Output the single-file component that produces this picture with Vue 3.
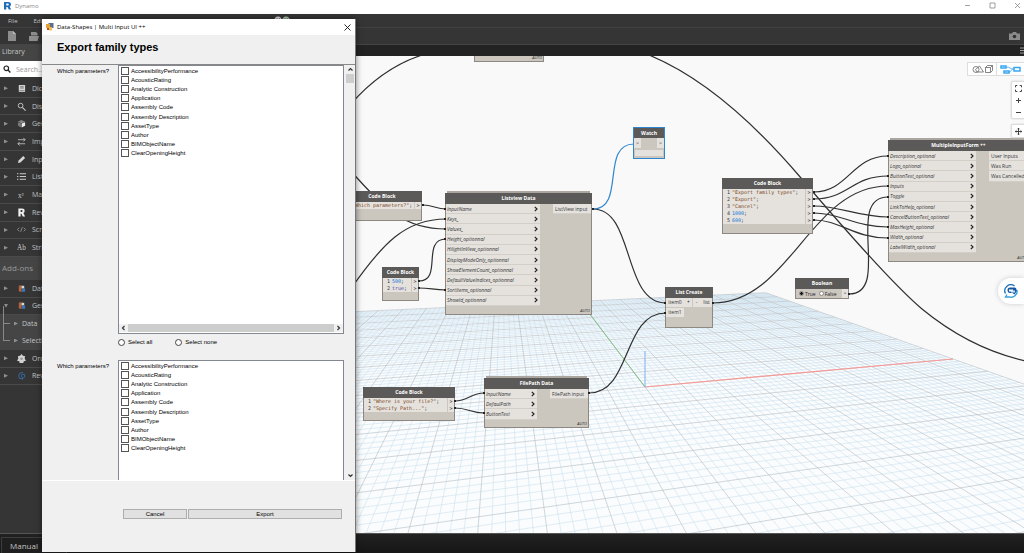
<script setup>
import { ref } from 'vue'

const search = ref('')
const selectMode = ref('')
const flag = ref('true')

const libraryItems = [
  { label: 'Dictionary', icon: 'book' },
  { label: 'Display', icon: 'search' },
  { label: 'Geometry', icon: 'cube' },
  { label: 'ImportExport', icon: 'swap' },
  { label: 'Input', icon: 'pencil' },
  { label: 'List', icon: 'list' },
  { label: 'Math', icon: 'math' },
  { label: 'Revit', icon: 'revit' },
  { label: 'Script', icon: 'code' },
  { label: 'String', icon: 'text' },
]

const parameters = [
  'AccessibilityPerformance',
  'AcousticRating',
  'Analytic Construction',
  'Application',
  'Assembly Code',
  'Assembly Description',
  'AssetType',
  'Author',
  'BIMObjectName',
  'ClearOpeningHeight',
]

/* Canvas origin relative to the window */
const OX = 200
const OY = 56

function place(n) {
  return { left: `${n.x - OX}px`, top: `${n.y - OY}px`, width: `${n.w}px`, height: `${n.h}px` }
}

const codeBlocks = [
  { x: 342, y: 191, w: 80, h: 30, lines: [['s', '"Which parameters?"']] },
  { x: 382, y: 267, w: 37, h: 34, lines: [['n', '500'], ['k', 'true']] },
  { x: 363, y: 387, w: 92, h: 34, lines: [['s', '"Where is your file?"'], ['s', '"Specify Path..."']] },
  {
    x: 722, y: 178, w: 91, h: 56,
    lines: [['s', '"Export family types"'], ['s', '"Export"'], ['s', '"Cancel"'], ['n', '1000'], ['n', '600']],
  },
]

const functionNodes = [
  {
    title: 'Listview Data', x: 445, y: 193, w: 147, h: 122, inW: 94, outW: 38,
    inputs: ['InputName', 'Keys_', 'Values_', 'Height_optionnal', 'HilightInView_optionnal', 'DisplayModeOnly_optionnal', 'ShowElementCount_optionnal', 'DefaultValueIndices_optionnal', 'SortItems_optionnal', 'ShowId_optionnal'],
    outputs: ['ListView input'],
  },
  {
    title: 'FilePath Data', x: 484, y: 378, w: 105, h: 50, inW: 52, outW: 38,
    inputs: ['InputName', 'DefaulPath', 'ButtonText'],
    outputs: ['FilePath input'],
  },
  {
    title: 'MultipleInputForm ++', x: 888, y: 140, w: 141, h: 122, inW: 87, outW: 39,
    inputs: ['Description_optional', 'Logo_optional', 'ButtonText_optional', 'Inputs', 'Toggle', 'LinkToHelp_optional', 'CancelButtonText_optional', 'MaxHeight_optional', 'Width_optional', 'LabelWidth_optional'],
    outputs: ['User Inputs', 'Was Run', 'Was Cancelled'],
  },
]

/* Perspective projection of the ground plane; u and v run from -1 to 1 */
function project(u, v) {
  const w = 0.1832 * u + 0.8434 * v + 1
  return [(482.6 * u + 424.2 * v + 645) / w, (37.77 * u + 168.4 * v + 387) / w]
}
function segment(a, b) {
  const p = project(...a)
  const q = project(...b)
  return `M${p[0].toFixed(2)} ${p[1].toFixed(2)}L${q[0].toFixed(2)} ${q[1].toFixed(2)}`
}
let minor = ''
let major = ''
for (let i = -50; i <= 50; i++) {
  const t = i / 50
  let d = segment([t, -0.6], [t, 1])
  if (t >= -0.6) d += segment([-1, t], [1, t])
  if (i % 5 === 0) major += d
  else minor += d
}
const plane = [[-1, -0.6], [-1, 1], [1, 1], [1, -0.6]].map((c) => project(...c).join(',')).join(' ')

const wires = [
  'M423 205C433 205 436 209 446 209',
  'M350 290C382 244 405 219 446 219',
  'M350 170C385 210 405 229 446 229',
  'M419 281C443 281 421 239 446 239',
  'M419 288C430 288 434 290 446 290',
  'M350 105Q382 68 422 55',
  'M649 55C700 76 750 118 801 178C852 238 895 286 922 309C950 332 985 352 1026 361',
  'M593 209C635 209 622 303 666 303',
  'M589 393C632 393 622 313 666 313',
  'M713 303C790 303 810 186 888 186',
  'M814 192C848 192 852 156 888 156',
  'M814 199C848 199 852 176 888 176',
  'M814 206C840 206 858 217 888 217',
  'M814 213C840 213 856 227 888 227',
  'M814 220C840 220 854 238 888 238',
  'M849 294C892 294 844 197 888 197',
  'M455 401C468 401 471 393 484 393',
  'M455 408C468 408 471 413 484 413',
]
const ports = [
  [423, 205], [445, 209], [445, 219], [445, 229], [445, 239], [445, 290], [419, 281], [419, 288],
  [593, 209], [665, 303], [589, 393], [665, 313], [713, 303], [814, 192], [814, 199], [814, 206],
  [814, 213], [814, 220], [888, 156], [888, 176], [888, 186], [888, 197], [888, 217], [888, 227],
  [888, 238], [849, 294], [455, 401], [455, 408], [484, 393], [484, 413],
]
</script>

<template>
  <div class="app">
    <header class="titlebar">
      <svg class="logo" viewBox="0 0 9 9"><path d="M1 1h4.500q2.500 0 2.500 2.500q0 1.600-1.300 2.200L8.200 8.500H5.800L4.500 6H3.300v2.500H1z" fill="#1f6fb8" /><path d="M3.300 2.600h1.500q1 0 1 .9t-1 .9H3.300z" fill="#fff" /></svg>
      <span class="app-name">Dynamo</span>
      <div class="win-controls">
        <button aria-label="Minimize"><svg viewBox="0 0 7 7"><path d="M1 3.500h5" /></svg></button>
        <button aria-label="Maximize"><svg viewBox="0 0 7 7"><path d="M1 1h5v5H1z" /></svg></button>
        <button aria-label="Close window"><svg viewBox="0 0 7 7"><path d="M1 1l5 5M6 1L1 6" /></svg></button>
      </div>
    </header>

    <nav class="menubar">
      <button>File</button>
      <button>Edit</button>
      <svg class="pack-icon" width="16" height="8" viewBox="0 0 16 8"><circle cx="4" cy="4" r="3.500" fill="#d8d8d8" /><circle cx="12" cy="4" r="3.500" fill="#a9c9a9" /><path d="M2.500 3h1M5 3h1M10.500 3h1M13 3h1" stroke="#444" /></svg>
    </nav>

    <div class="toolbar">
      <button aria-label="New"><svg width="8" height="10" viewBox="0 0 8 10"><path d="M0 0h5l3 3v7H0z" fill="#8d8d8d" /><path d="M5 0v3h3z" fill="#bbb" /></svg></button>
      <button aria-label="Open"><svg width="10" height="10" viewBox="0 0 10 10"><path d="M0 5h10L8.500 10H0zM2 1h5l1.500 1.500V4.500H2z" fill="#8d8d8d" /></svg></button>
      <button class="camera" aria-label="Camera"><svg width="11" height="8" viewBox="0 0 11 8"><path d="M0 1.500h3L4 0h3l1 1.500h3V8H0z" fill="#8b8b8b" /><circle cx="5.500" cy="4.500" r="1.800" fill="#333" /></svg></button>
    </div>

    <div class="body">
      <aside class="library">
        <h2>Library</h2>
        <label class="search">
          <svg viewBox="0 0 8 8"><circle cx="3.300" cy="3.300" r="2.300" fill="none" stroke="#222" stroke-width="1.200" /><path d="M5 5l2.400 2.400" stroke="#222" stroke-width="1.400" /></svg>
          <input v-model="search" type="text" placeholder="Search..." aria-label="Search library" />
        </label>
        <div class="lib-list">
          <button v-for="item in libraryItems" :key="item.label" class="lib-row">
            <i class="tri"></i>
            <svg class="lib-icon" viewBox="0 0 10 10">
              <template v-if="item.icon === 'book'"><rect x="2" y="1" width="7" height="8" rx=".8" fill="#d6d6d6" /><path d="M3.500 3h4M3.500 4.500h4M2.500 7.500h6" stroke="#444" stroke-width=".7" /></template>
              <template v-else-if="item.icon === 'search'"><circle cx="4" cy="4" r="2.600" fill="none" stroke="#ccc" /><path d="M6 6l3.500 3.500" stroke="#ccc" stroke-width="1.200" /></template>
              <template v-else-if="item.icon === 'cube'"><path d="M1 3l4-2 4 2-4 1.600z" fill="#888" /><path d="M1 3.500l3.700 1.600v4.400L1 7.500z" fill="#777" /><path d="M9 3.500L5.200 5.100v4.400L9 7.500z" fill="#eee" /></template>
              <path v-else-if="item.icon === 'swap'" d="M1 3h8M7 1l2 2-2 2M9 7.500H1M3 5.500l-2 2 2 2" fill="none" stroke="#ccc" stroke-width=".9" />
              <path v-else-if="item.icon === 'pencil'" d="M1 9l.8-2.800L7 1.200l2 2L3.800 8.200z" fill="#d6d6d6" />
              <path v-else-if="item.icon === 'list'" d="M0 2h1.500M3 2h7M0 5h1.500M3 5h7M0 8h1.500M3 8h7" stroke="#ccc" stroke-width="1.200" />
              <text v-else-if="item.icon === 'math'" x="1" y="9" class="serif-glyph">x²</text>
              <path v-else-if="item.icon === 'revit'" d="M1.500 .5h4q3 0 3 2.700q0 1.800-1.400 2.400L9 9.500H6.300L5 6.300H4v3.200H1.500zM4 2.300v2.200h1.200q1 0 1-1.100t-1-1.100z" fill="#f0f0f0" fill-rule="evenodd" />
              <path v-else-if="item.icon === 'code'" d="M2.500 3L.5 5l2 2M7.500 3l2 2-2 2M6 2.500l-2 5" fill="none" stroke="#aaa" stroke-width=".8" />
              <text v-else x="0" y="8" class="serif-glyph">Ab</text>
            </svg>
            <span>{{ item.label }}</span>
          </button>
        </div>
        <h3>Add-ons</h3>
        <div class="lib-addons">
          <button v-for="(name, i) in ['Data-Shapes', 'GeniusLoci']" :key="name" class="lib-row">
            <i class="tri" :class="{ down: i === 1 }"></i>
            <svg class="lib-icon" viewBox="0 0 10 10"><path d="M2 2l3-1v8L2 8z" fill="#b5643c" /><path d="M5 2h3v3H5z" fill="#cfd9e2" /><path d="M6 5h3v3.500H5z" fill="#3d78b5" /></svg>
            <span>{{ name }}</span>
          </button>
        </div>
        <div class="tree">
          <button v-for="name in ['Data', 'Selection']" :key="name"><i class="tri"></i><span>{{ name }}</span></button>
        </div>
        <div class="lib-addons">
          <button class="lib-row">
            <i class="tri"></i>
            <svg class="lib-icon" viewBox="0 0 10 10"><path d="M5 0l1.600 2L9 2.500 8.500 5 10 7.500 7.500 8 7 10H3L2.500 8 0 7.500 1.500 5 1 2.500 3.400 2z" fill="#d2d2d2" /><circle cx="5" cy="5.300" r="1.500" fill="#999" /></svg>
            <span>Orchid</span>
          </button>
          <button class="lib-row">
            <i class="tri"></i>
            <svg class="lib-icon" viewBox="0 0 10 10"><path d="M6.500 1.500L3 2.500 1.800 5.500 3 8.500h3.500l2-2V4L6 3.500 4.500 5.500 6 7V9.500" fill="none" stroke="#3a6fb0" stroke-width="1" /></svg>
            <span>Revit</span>
          </button>
        </div>
      </aside>

      <main class="workspace">
        <div class="tabs">
          <button aria-label="Tab menu"><svg width="4" height="7" viewBox="0 0 4 7"><path d="M0 1h4M0 3.500h4M0 6h4" stroke="#bbb" stroke-width=".8" /></svg></button>
        </div>
        <div class="canvas">
          <svg class="layer">
            <g :transform="`translate(${-OX} ${-OY})`" fill="none">
              <polygon :points="plane" fill="#fafcfd" />
              <path :d="minor" class="minor" />
              <path :d="major" class="major" />
              <path d="M645 387L953 359" stroke="#f59a96" stroke-width="1.200" />
              <path d="M645 387L580 301" stroke="#7fbf86" />
              <path d="M645 387V351" stroke="#7fb0ee" />
              <path v-for="d in wires" :key="d" :d="d" class="wire" />
              <path d="M593 209C626 209 600 144 634 144" class="wire blue" />
            </g>
          </svg>

          <div class="node stub" :style="place({ x: 474, y: 40, w: 70, h: 22 })"><span class="auto">AUTO</span></div>

          <section v-for="n in codeBlocks" :key="n.x" class="node" :style="place(n)">
            <h4>Code Block</h4>
            <div v-for="(l, i) in n.lines" :key="i" class="code-line">
              <span class="num">{{ i + 1 }}</span>
              <code><span :class="l[0]">{{ l[1] }}</span>;</code>
              <span class="out">&gt;</span>
            </div>
          </section>

          <section v-for="n in functionNodes" :key="n.title" class="node capped" :style="place(n)">
            <h4>{{ n.title }}</h4>
            <div class="cols">
              <div class="rows ins" :style="{ width: n.inW + 'px', height: n.inputs.length * 10.2 + 'px' }">
                <div v-for="p in n.inputs" :key="p"><em>{{ p }}</em><svg width="4" height="6" viewBox="0 0 4 6"><path d="M.8 .8L3 3 .8 5.200" fill="none" stroke="#222" stroke-width="1.200" /></svg></div>
              </div>
              <div class="rows outs" :style="{ width: n.outW + 'px', height: n.outputs.length * 10.2 + 'px' }">
                <div v-for="p in n.outputs" :key="p">{{ p }}</div>
              </div>
            </div>
            <span class="auto">AUTO</span>
          </section>

          <section class="node watch" :style="place({ x: 633, y: 127, w: 32, h: 32 })">
            <h4>Watch</h4>
            <div class="io"><span>&gt;</span><span>&gt;</span></div>
            <div class="result"></div>
          </section>

          <section class="node" :style="place({ x: 665, y: 287, w: 48, h: 41 })">
            <h4>List Create</h4>
            <div class="create">
              <span>item0</span><button>+</button><button>-</button><span>list</span>
              <span>item1</span>
            </div>
          </section>

          <section class="node" :style="place({ x: 795, y: 278, w: 54, h: 21 })">
            <h4>Boolean</h4>
            <div class="bool">
              <label><input v-model="flag" type="radio" value="true" />True</label>
              <label><input v-model="flag" type="radio" value="false" />False</label>
              <span class="out">&gt;</span>
            </div>
          </section>

          <svg class="layer ports">
            <g :transform="`translate(${-OX} ${-OY})`">
              <rect v-for="(p, i) in ports" :key="i" :x="p[0] - 1" :y="p[1] - 1" width="2" height="2" fill="#222" />
            </g>
          </svg>

          <div class="view-tools">
            <div class="modes">
              <button aria-label="3D view"><svg width="21" height="8" viewBox="0 0 21 8"><g fill="none" stroke="#666" stroke-width=".8"><circle cx="4" cy="4.500" r="3" /><path d="M3.500 4.500L7.500 1l4 6H5zM13.500 2.500h5v5h-5zM13.500 2.500l2-2h5v5l-2 2M18.500 2.500l2-2" /></g></svg></button>
              <button aria-label="Graph view"><svg width="21" height="9" viewBox="0 0 21 9"><g fill="none" stroke="#38a7f2" stroke-width="1.500"><rect x="1" y="1" width="5" height="2" /><rect x="4" y="6" width="5" height="2" /><rect x="14" y="2.500" width="6" height="3.500" /><path d="M6.500 2c4 0 3 2 7 2M9 7c3 0 1-3 5-3" stroke-width=".8" /></g></svg></button>
            </div>
            <div class="zoom">
              <button aria-label="Fit"><svg width="7" height="7" viewBox="0 0 7 7"><path d="M.5 2.300V.5h1.800M4.700 .5h1.800v1.800M6.500 4.700v1.800H4.700M2.300 6.500H.5V4.700" /></svg></button>
              <button aria-label="Zoom in"><svg width="7" height="7" viewBox="0 0 7 7"><path d="M1 3.500h5M3.500 1v5" /></svg></button>
              <button aria-label="Zoom out"><svg width="7" height="7" viewBox="0 0 7 7"><path d="M1 3.500h5" /></svg></button>
            </div>
            <div class="zoom pan">
              <button aria-label="Pan"><svg width="7" height="7" viewBox="0 0 7 7"><path d="M0 3.500h7M3.500 0v7M2.500 1.200L3.500 .2l1 1M2.500 5.800l1 1 1-1M1.200 2.500l-1 1 1 1M5.800 2.500l1 1-1 1" /></svg></button>
            </div>
          </div>

          <button class="chat" aria-label="Assistant">
            <svg width="14" height="14" viewBox="0 0 14 14"><path d="M10.500 2A6 6 0 0 0 1.500 9.500" fill="none" stroke="#1d6fb8" stroke-width="1.300" /><path d="M13 6A6 6 0 0 1 5 12.800L1.500 13l1.500-2.500" fill="none" stroke="#38a0dd" stroke-width="1.300" /><path d="M3.500 6q0-2.500 2.500-2.500h4.500Q12.500 3.500 12.500 5.500q1 1.500-1 3.500l-1 1.500-2-1.500H6Q3.500 9 3.500 6z" fill="#1558a0" /><path d="M5 5.500h4v2H5z" fill="#fff" /><path d="M7 6.500h4V8.500H7z" fill="#cfe3f5" /></svg>
          </button>
        </div>
      </main>
    </div>

    <footer class="runbar"><button>Manual</button></footer>

    <div class="dialog" role="dialog" aria-label="Data-Shapes">
      <div class="dlg-title">
        <svg width="8" height="8" viewBox="0 0 8 8"><rect x="2.500" y="0" width="5" height="5" fill="#5a6f90" /><rect x="0" y="1" width="4" height="4" fill="#e3a53a" /><rect x="3" y="4" width="3" height="3.500" fill="#f0c04c" /><rect x="1" y="5" width="2" height="2" fill="#c54a3a" /></svg>
        <span>Data-Shapes | Multi Input UI ++</span>
        <button aria-label="Close"><svg width="7" height="7" viewBox="0 0 7 7"><path d="M.5 .5l6 6M6.500 .5l-6 6" stroke="#111" stroke-width=".9" /></svg></button>
      </div>
      <h1>Export family types</h1>
      <div class="dlg-scroll">
        <div class="dlg-content">
          <div class="field">
            <span class="field-label">Which parameters?</span>
            <div class="listbox tall">
              <div class="checks">
                <label v-for="p in parameters" :key="p"><input type="checkbox" />{{ p }}</label>
              </div>
              <div class="hscroll">
                <svg width="9" height="8" viewBox="0 0 9 8"><path d="M5.500 2L3.500 4l2 2" /></svg>
                <i></i>
                <svg width="9" height="8" viewBox="0 0 9 8"><path d="M3.500 2l2 2-2 2" /></svg>
              </div>
            </div>
          </div>
          <div class="radios">
            <label><input v-model="selectMode" type="radio" value="all" />Select all</label>
            <label><input v-model="selectMode" type="radio" value="none" />Select none</label>
          </div>
          <div class="field">
            <span class="field-label">Which parameters?</span>
            <div class="listbox tall">
              <div class="checks">
                <label v-for="p in parameters" :key="p"><input type="checkbox" />{{ p }}</label>
              </div>
            </div>
          </div>
        </div>
        <div class="vscroll">
          <svg width="9" height="9" viewBox="0 0 9 9"><path d="M2.500 5.500l2-2 2 2" /></svg>
          <i></i>
          <svg width="9" height="9" viewBox="0 0 9 9"><path d="M2.500 3.500l2 2 2-2" /></svg>
        </div>
      </div>
      <div class="dlg-actions">
        <button>Cancel</button>
        <button class="grow">Export</button>
      </div>
    </div>
  </div>
</template>

<style>
html,
body {
  margin: 0;
  background: #1c1c1c;
}
</style>

<style scoped>
.app {
  position: relative;
  display: flex;
  flex-direction: column;
  height: 100vh;
  overflow: hidden;
  background: #353535;
  color: #c4c4c4;
  font-family: "Open Sans", "Noto Sans", sans-serif;
  font-size: 6px;
}
.app * {
  box-sizing: border-box;
}
button {
  margin: 0;
  padding: 0;
  border: 0;
  background: none;
  color: inherit;
  font: inherit;
}
svg {
  display: block;
  flex: none;
}
h1, h2, h3, h4 {
  margin: 0;
}

.titlebar {
  display: flex;
  align-items: center;
  flex: none;
  height: 14px;
  padding: 0 3px;
  background: #fff;
  color: #888;
}
.logo {
  width: 9px;
  height: 9px;
  margin: 0 3px 3px 0;
}
.app-name {
  padding-bottom: 3px;
}
.win-controls {
  display: flex;
  gap: 18px;
  margin-left: auto;
  padding-bottom: 3px;
}
.win-controls svg {
  width: 7px;
  height: 7px;
  fill: none;
  stroke: #888;
  stroke-width: 0.8;
}
.menubar {
  display: flex;
  flex: none;
  gap: 16px;
  height: 13px;
  padding-left: 8px;
}
.pack-icon {
  margin: 2px 0 0 214px;
}
.toolbar {
  display: flex;
  align-items: center;
  flex: none;
  gap: 13px;
  height: 18px;
  padding: 0 4px 0 8px;
  border-top: 1px solid #404040;
  border-bottom: 1px solid #444;
}
.camera {
  margin-left: auto;
}

.body {
  display: flex;
  flex: 1;
  min-height: 0;
}
.library {
  flex: none;
  width: 200px;
  font-size: 7px;
}
.library h2 {
  height: 16px;
  padding-left: 2px;
  background: #454545;
  font-size: 7px;
  font-weight: 400;
  line-height: 13px;
}
.search {
  display: flex;
  align-items: center;
  gap: 5px;
  height: 16px;
  margin-bottom: 3px;
  padding-left: 3px;
  background: #fff;
}
.search svg {
  width: 8px;
  height: 8px;
}
.search input {
  width: 120px;
  height: 14px;
  padding: 0;
  border: 0;
  outline: 0;
  color: #555;
  font: 7px "Open Sans", sans-serif;
}
.search input::placeholder {
  color: #999;
}
.lib-list {
  display: grid;
  grid-auto-rows: 1fr;
  height: 177px;
}
.lib-row {
  display: flex;
  align-items: center;
  width: 100%;
  min-height: 0;
  padding-left: 4px;
  border-bottom: 1px solid #4a4a4a;
  text-align: left;
}
.lib-addons {
  display: grid;
  grid-auto-rows: 1fr;
  height: 35px;
}
.tri {
  flex: none;
  width: 4px;
  height: 4px;
  background: #8f8f8f;
  clip-path: polygon(0 0, 100% 50%, 0 100%);
}
.tri.down {
  clip-path: polygon(0 0, 100% 0, 50% 100%);
}
.lib-icon {
  width: 9px;
  height: 9px;
  margin: 0 6px 0 9px;
}
.serif-glyph {
  fill: #ccc;
  font: 8px "Liberation Serif", serif;
}
.library h3 {
  height: 23px;
  padding-left: 2px;
  background: #454545;
  color: #999;
  font-size: 8px;
  font-weight: 400;
  line-height: 22px;
}
.tree {
  height: 35px;
  padding-left: 3px;
  background: #454545;
}
.tree button {
  display: flex;
  align-items: center;
  gap: 4px;
  height: 17px;
}
.tree button::before {
  content: "";
  width: 6px;
  height: 17px;
  margin-top: -17px;
  border-bottom: 1px solid #888;
  border-left: 1px solid #888;
}

.workspace {
  display: flex;
  flex: 1;
  flex-direction: column;
  min-width: 0;
}
.tabs {
  display: flex;
  align-items: center;
  justify-content: flex-end;
  flex: none;
  height: 11px;
  background: #232323;
}
.canvas {
  position: relative;
  flex: 1;
  overflow: hidden;
  background: #f9f9f9;
}
.layer {
  position: absolute;
  inset: 0;
  width: 100%;
  height: 100%;
}
.ports {
  pointer-events: none;
}
.minor {
  stroke: #c3dcec;
  stroke-opacity: 0.48;
}
.major {
  stroke: #a9b5bc;
  stroke-opacity: 0.52;
}
.wire {
  stroke: #303030;
  stroke-width: 1.2;
}
.wire.blue {
  stroke: #2f86cf;
}

.node {
  position: absolute;
  border: 1px solid #8d8982;
  border-top: 0;
  background: #cbc6be;
  color: #333;
  font-size: 5px;
  line-height: 6px;
}
.node h4 {
  height: 11px;
  margin: 0 -1px;
  background: #5c5a58;
  color: #fff;
  font-size: 5px;
  font-weight: 700;
  line-height: 11px;
  text-align: center;
}
.capped::before {
  content: "";
  position: absolute;
  top: -2px;
  right: 1px;
  left: 1px;
  height: 2px;
  background: #aaa69f;
}
.auto {
  position: absolute;
  right: 1px;
  bottom: 1px;
  font-size: 4px;
  font-style: italic;
  line-height: 5px;
}
.code-line {
  display: flex;
  height: 7px;
  background: #e5e2de;
  font-family: "DejaVu Sans Mono", monospace;
  line-height: 7px;
}
.num {
  width: 8px;
  padding-right: 1px;
  text-align: right;
}
.code-line code {
  padding-left: 1px;
  font: inherit;
  white-space: nowrap;
}
.s {
  color: #7a4519;
}
.n {
  color: #0f76d8;
}
.k {
  color: #4a4aa8;
}
.out {
  width: 7px;
  margin-left: auto;
  border-left: 1px solid #cbc6be;
  text-align: center;
}
.cols {
  display: flex;
  align-items: flex-start;
  justify-content: space-between;
}
.rows {
  display: grid;
  grid-auto-rows: 1fr;
}
.rows div {
  display: flex;
  align-items: center;
  justify-content: space-between;
  min-height: 0;
  padding: 0 2px 0 1px;
  border-bottom: 1px solid #d2cec8;
  background: #e5e2de;
  white-space: nowrap;
}
.outs div {
  padding: 0 1px 0 2px;
}
.watch {
  border: 1px solid #2f86cf;
}
.watch h4 {
  height: 10px;
  margin: 0;
}
.io {
  display: flex;
  justify-content: space-between;
  height: 10px;
}
.io span {
  width: 7px;
  background: #e5e2de;
  line-height: 10px;
  text-align: center;
}
.result {
  height: 6px;
  margin: 2px 1px;
  background: #e5e2de;
}
.create {
  display: grid;
  grid-template-columns: 18px 8px 8px 11px;
  grid-auto-rows: 9px;
  gap: 1px 0;
  justify-content: space-between;
}
.create span,
.create button {
  background: #e5e2de;
  line-height: 9px;
  text-align: center;
}
.bool {
  display: flex;
  align-items: center;
  height: 9px;
  padding-left: 3px;
  color: #222;
}
.bool label {
  display: flex;
  align-items: center;
  gap: 1px;
  margin-right: 3px;
}
.bool .out {
  background: #e5e2de;
  line-height: 9px;
}
input[type="radio"] {
  flex: none;
  width: 7px;
  height: 7px;
  margin: 0;
  border: 1px solid #444;
  border-radius: 50%;
  appearance: none;
  background: #fff;
}
.bool input[type="radio"] {
  width: 5px;
  height: 5px;
  border-color: #888;
}
input[type="radio"]:checked {
  background: radial-gradient(circle, #111 1px, #fff 2px);
}

.view-tools {
  position: absolute;
  top: 6px;
  right: 0;
  display: flex;
  flex-direction: column;
  align-items: flex-end;
  gap: 5px;
}
.modes {
  display: flex;
  border: 1px solid #ddd;
  border-right: 0;
  background: #fff;
}
.modes button {
  display: grid;
  place-items: center;
  width: 28px;
  height: 12px;
}
.modes button + button {
  border-left: 1px solid #ddd;
}
.zoom {
  width: 13px;
  border: 1px solid #ddd;
  border-right: 0;
  border-radius: 2px 0 0 2px;
  background: #fff;
  box-shadow: 0 0 2px #ccc;
}
.zoom button {
  display: grid;
  place-items: center;
  width: 100%;
  height: 12px;
}
.zoom svg {
  fill: none;
  stroke: #444;
  stroke-width: 1;
}
.chat {
  position: absolute;
  top: 222px;
  right: 0;
  display: grid;
  place-items: center;
  width: 26px;
  height: 26px;
  border-radius: 13px 0 0 13px;
  background: #fff;
  box-shadow: 0 0 5px #ccc;
}

.runbar {
  flex: none;
  height: 20px;
  padding: 3px 0 0 1px;
  border-top: 1px solid #555;
  background: linear-gradient(#222, #161616);
}
.runbar button {
  display: block;
  width: 66px;
  height: 17px;
  padding-left: 8px;
  border: 1px solid #3c3c3c;
  background: #1f1f1f;
  font-size: 8px;
  text-align: left;
}

.dialog {
  position: absolute;
  top: 19px;
  bottom: 1px;
  left: 42px;
  display: flex;
  flex-direction: column;
  width: 314px;
  border-right: 1px solid #777;
  background: #f0f0f0;
  box-shadow: 0 0 6px rgba(0, 0, 0, 0.5);
  color: #000;
  font-family: "Liberation Sans", sans-serif;
}
.dlg-title {
  display: flex;
  align-items: center;
  flex: none;
  gap: 3px;
  height: 16px;
  padding: 0 4px;
  background: #fff;
  font-family: "Open Sans", sans-serif;
}
.dlg-title button {
  margin-left: auto;
}
.dialog h1 {
  flex: none;
  height: 30px;
  padding-left: 15px;
  border-bottom: 1px solid #888;
  color: #000;
  font-size: 11px;
  line-height: 24px;
}
.dlg-scroll {
  display: flex;
  flex: 1;
  min-height: 0;
  border-bottom: 1px solid #fff;
}
.dlg-content {
  flex: 1;
  overflow: hidden;
}
.field {
  display: flex;
}
.field-label {
  width: 76px;
  padding-left: 15px;
  line-height: 12px;
  white-space: nowrap;
}
.listbox {
  display: flex;
  flex: 1;
  flex-direction: column;
  justify-content: space-between;
  margin-right: 1px;
  border: 1px solid #828790;
  background: #fff;
}
.tall {
  height: 269px;
}
.checks {
  display: grid;
  grid-auto-rows: 1fr;
  height: 92px;
  padding-left: 2px;
}
.checks label {
  display: flex;
  align-items: center;
  gap: 2px;
  min-height: 0;
}
.checks input {
  flex: none;
  width: 8px;
  height: 8px;
  margin: 0;
  border: 1px solid #555;
  appearance: none;
  background: #fff;
}
.hscroll {
  display: flex;
  height: 8px;
  margin-bottom: 1px;
  background: #f0f0f0;
}
.hscroll i {
  flex: 1;
  background: #cdcdcd;
}
.hscroll svg,
.vscroll svg {
  fill: none;
  stroke: #333;
  stroke-width: 1.2;
}
.radios {
  display: flex;
  gap: 23px;
  height: 26px;
  padding: 4px 0 0 76px;
}
.radios label {
  display: flex;
  align-items: center;
  gap: 3px;
  height: 8px;
}
.vscroll {
  display: flex;
  flex: none;
  flex-direction: column;
  align-items: center;
  width: 10px;
  background: #f0f0f0;
}
.vscroll i {
  width: 8px;
  height: 9px;
  margin-bottom: auto;
  background: #cdcdcd;
}
.dlg-actions {
  display: flex;
  flex: none;
  gap: 1px;
  height: 71px;
  padding: 28px 13px 0 81px;
}
.dlg-actions button {
  width: 64px;
  height: 10px;
  border: 1px solid #adadad;
  background: #e1e1e1;
  line-height: 8px;
}
.dlg-actions .grow {
  flex: 1;
}
</style>
